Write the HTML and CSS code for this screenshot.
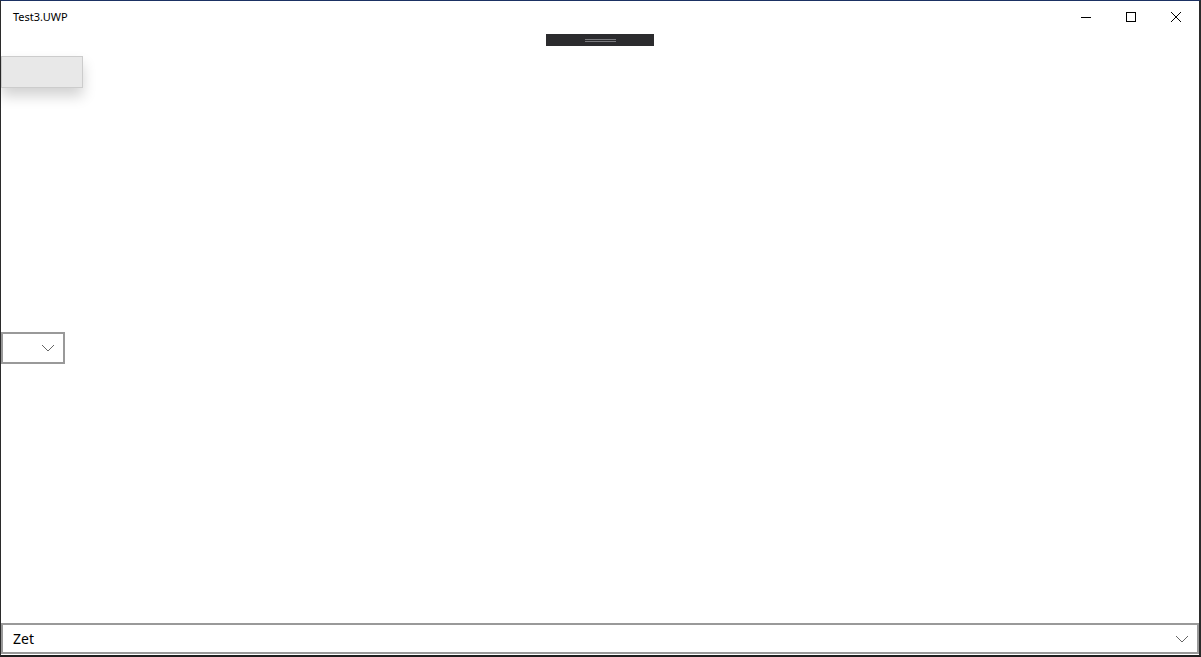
FILE: index.html
```html
<!DOCTYPE html>
<html>
<head>
<meta charset="utf-8">
<link rel="stylesheet" href="styles.css">
</head>
<body>
<div class="window">
  <div class="titlebar">
    <div class="title">Test3.UWP</div>
    <div class="caption">
      <div class="cbtn"><svg width="12" height="12" viewBox="0 0 12 12"><line x1="1" y1="6.5" x2="11" y2="6.5" stroke="#000" stroke-width="1"/></svg></div>
      <div class="cbtn"><svg width="12" height="12" viewBox="0 0 12 12"><rect x="1.5" y="1.5" width="9" height="9" fill="none" stroke="#000" stroke-width="1"/></svg></div>
      <div class="cbtn"><svg width="12" height="12" viewBox="0 0 12 12"><path d="M1 1L11 11M11 1L1 11" stroke="#000" stroke-width="1"/></svg></div>
    </div>
  </div>
  <div class="content">
    <div class="grip"><span class="grip-lines"></span></div>
    <div class="button"></div>
    <div class="combo small">
      <span class="combo-text"></span>
      <svg class="chev" width="14" height="8" viewBox="0 0 14 8"><polyline points="1,1 7,7 13,1" fill="none" stroke="#666" stroke-width="1"/></svg>
    </div>
    <div class="spacer"></div>
    <div class="combo wide">
      <span class="combo-text">Zet</span>
      <svg class="chev" width="14" height="8" viewBox="0 0 14 8"><polyline points="1,1 7,7 13,1" fill="none" stroke="#666" stroke-width="1"/></svg>
    </div>
  </div>
</div>
</body>
</html>
```
FILE: styles.css
```css
html, body {
  margin: 0;
  padding: 0;
  background: #1e1e1e;
}
.window {
  width: 1201px;
  height: 657px;
  box-sizing: border-box;
  border-top: 1px solid #1b3163;
  border-left: 1px solid #2b2b2b;
  border-right: 2px solid #2b2b2b;
  border-bottom: 2px solid #1e1e1e;
  background: #ffffff;
  display: flex;
  flex-direction: column;
  font-family: "Noto Sans", "Open Sans", sans-serif;
}
.titlebar {
  height: 31px;
  display: flex;
  align-items: center;
  justify-content: space-between;
}
.title {
  font-size: 11px;
  color: #000;
  padding-left: 12px;
  padding-bottom: 0;
}
.caption {
  display: flex;
  height: 100%;
  padding-right: 1px;
}
.cbtn {
  width: 45px;
  height: 100%;
  display: flex;
  align-items: center;
  justify-content: center;
  padding-bottom: 0;
  box-sizing: border-box;
}
.content {
  flex: 1;
  display: flex;
  flex-direction: column;
  align-items: flex-start;
}
.grip {
  align-self: center;
  margin-top: 2px;
  width: 108px;
  height: 12px;
  background: #2b2b2e;
  display: flex;
  align-items: center;
  justify-content: center;
}
.grip-lines {
  width: 31px;
  height: 3px;
  border-top: 1px solid #7a7a7e;
  border-bottom: 1px solid #7a7a7e;
  box-sizing: border-box;
}
.button {
  margin-top: 10px;
  width: 82px;
  height: 32px;
  box-sizing: border-box;
  background: #e8e8e8;
  border: 1px solid #cccccc;
  box-shadow: 0 8px 14px rgba(0, 0, 0, 0.18);
}
.combo {
  box-sizing: border-box;
  border: 2px solid #999999;
  background: #fff;
  display: flex;
  align-items: center;
  justify-content: space-between;
}
.small {
  margin-top: 244px;
  width: 64px;
  height: 32px;
  padding: 0 8px 0 10px;
}
.spacer {
  flex: 1;
}
.wide {
  align-self: stretch;
  height: 31px;
  padding: 0 8px 0 10px;
  margin-bottom: 1px;
}
.combo-text {
  font-size: 14px;
  color: #000;
}
.chev {
  display: block;
}
```
